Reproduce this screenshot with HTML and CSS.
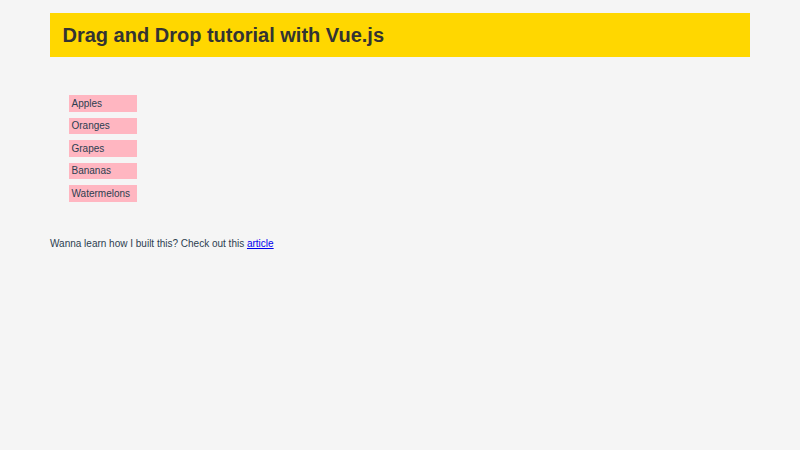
FILE: index.html
```html
<!DOCTYPE html>
<html lang="en">
<head>
<meta charset="utf-8">
<title>Drag and Drop tutorial with Vue.js</title>
<link rel="stylesheet" href="styles.css">
</head>
<body>
<div class="page">
  <header class="banner">
    <h1 class="title">Drag and Drop tutorial with Vue.js</h1>
  </header>
  <ul class="items">
    <li class="item" draggable="true">Apples</li>
    <li class="item" draggable="true">Oranges</li>
    <li class="item" draggable="true">Grapes</li>
    <li class="item" draggable="true">Bananas</li>
    <li class="item" draggable="true">Watermelons</li>
  </ul>
  <p class="note">Wanna learn how I built this? Check out this <a class="link" href="#">article</a></p>
</div>
</body>
</html>
```

FILE: styles.css
```css
html, body {
  margin: 0;
  padding: 0;
  background: #f5f5f5;
}

body {
  font-family: "Liberation Sans", Arial, sans-serif;
  font-size: 10px;
  color: #2c3e50;
}

.page {
  width: 700px;
  margin: 0 auto;
  padding-top: 12.5px;
}

.banner {
  background: #ffd700;
  padding: 11.5px 12.5px 9.5px;
}

.title {
  margin: 0;
  font-size: 20px;
  line-height: 23px;
  font-weight: bold;
  color: #333333;
}

.items {
  list-style: none;
  margin: 38.5px 0 0 0;
  padding: 0 0 0 18.5px;
}

.item {
  width: 62.5px;
  background: #ffb6c1;
  padding: 2.5px 3px;
  line-height: 11.5px;
  margin-bottom: 6px;
}

.note {
  margin: 36.5px 0 0 0;
  line-height: 11.5px;
}

.link {
  color: #0000ee;
  text-decoration: underline;
}
```
